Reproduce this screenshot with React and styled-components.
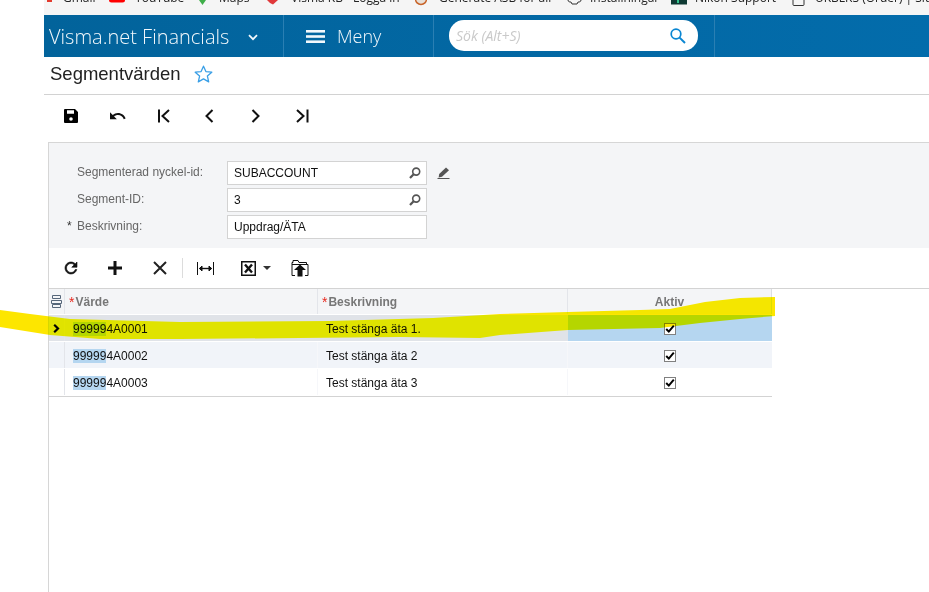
import styled, { createGlobalStyle } from "styled-components"

const Global = createGlobalStyle`
  html, body {
    margin: 0;
    padding: 0;
    background: #fff;
  }
  body {
    font-family: "Liberation Sans", Arial, sans-serif;
    font-size: 12px;
    color: #111;
  }
`

const Page = styled.div`
  position: relative;
  width: 929px;
  height: 592px;
  overflow: hidden;
  background: #fff;
  padding-left: 44px;
  box-sizing: border-box;
`

const Bookmarks = styled.div`
  display: flex;
  align-items: flex-start;
  height: 15px;
  padding-left: 3px;
  background: #f5f5f5;
  overflow: hidden;
`

const Bookmark = styled.div`
  display: flex;
  flex: none;
  align-items: flex-start;
  gap: ${props => props.$gap}px;
  width: ${props => props.$w}px;
  height: 6px;
  font-family: "Open Sans", sans-serif;
  font-size: 12px;
  line-height: 17px;
  white-space: nowrap;
  color: #222;

  svg {
    flex: none;
    display: block;
  }

  span {
    margin-top: -11px;
  }
`

const TopBar = styled.div`
  display: flex;
  height: 42px;
  background: linear-gradient(90deg, #02639b, #036cab);
  color: #f2f8fc;
  font-family: "Open Sans", sans-serif;
`

const Brand = styled.div`
  display: flex;
  align-items: center;
  box-sizing: border-box;
  width: 240px;
  padding-left: 5px;
  border-right: 1px solid #2a7fb3;
  font-size: 20px;
  font-weight: 300;
  white-space: nowrap;

  svg {
    margin: 3px 0 0 19px;
  }
`

const MenuButton = styled.div`
  display: flex;
  align-items: center;
  gap: 12px;
  box-sizing: border-box;
  width: 150px;
  padding-left: 22px;
  border-right: 1px solid #2a7fb3;
  font-size: 18px;
  font-weight: 300;
`

const SearchCell = styled.div`
  display: flex;
  align-items: center;
  box-sizing: border-box;
  width: 281px;
  padding: 0 0 1px 15px;
  border-right: 1px solid #2a7fb3;
`

const SearchBox = styled.div`
  display: flex;
  align-items: center;
  justify-content: space-between;
  box-sizing: border-box;
  width: 249px;
  height: 31px;
  padding: 0 12px 0 7px;
  background: #fff;
  border-radius: 15px;
  color: #c9c9c9;
  font-size: 14px;
  font-style: italic;
`

const TitleRow = styled.div`
  display: flex;
  align-items: center;
  gap: 13px;
  box-sizing: border-box;
  height: 38px;
  padding: 0 0 3px 6px;
  border-bottom: 1px solid #d2d2d2;
`

const Title = styled.h1`
  margin: 0;
  font-size: 18.5px;
  font-weight: 400;
  color: #222;
`

const Toolbar = styled.div`
  display: flex;
  align-items: center;
  box-sizing: border-box;
  height: ${props => props.$h}px;
  padding-bottom: ${props => props.$pad || 0}px;
  border-bottom: 1px solid ${props => props.$line || "transparent"};
`

const MainToolbar = styled(Toolbar)`
  margin-left: 4px;
`

const Body = styled.div`
  margin-left: 4px;
  height: 450px;
  border-left: 1px solid #d6d6d6;
  border-top: 1px solid #d6d6d6;
`

const ToolButton = styled.div`
  display: flex;
  flex: none;
  align-items: center;
  justify-content: center;
  gap: ${props => props.$gap || 0}px;
  width: ${props => props.$w}px;

  svg {
    display: block;
  }
`

const Separator = styled.div`
  flex: none;
  width: 1px;
  height: 20px;
  background: #dcdcdc;
`

const Form = styled.div`
  display: flex;
  flex-direction: column;
  gap: 3px;
  height: 105px;
  box-sizing: border-box;
  padding-top: 18px;
  background: #f4f5f7;
`

const FormRow = styled.div`
  display: flex;
  align-items: center;
  height: 24px;
`

const Label = styled.div`
  flex: none;
  box-sizing: border-box;
  width: 178px;
  padding: 0 0 3px 28px;
  color: #666;
`

const Required = styled.span`
  display: inline-block;
  width: 10px;
  margin-left: -10px;
  color: #333;
`

const Field = styled.div`
  display: flex;
  align-items: center;
  justify-content: space-between;
  box-sizing: border-box;
  width: 200px;
  height: 24px;
  padding: 0 5px 0 6px;
  background: #fff;
  border: 1px solid #d3d3d3;
  color: #111;
`

const Pencil = styled.svg`
  margin-left: 10px;
`

const GridBlock = styled.div`
  width: 723px;
  border-bottom: 1px solid #d3d3d3;
`

const GridRow = styled.div`
  display: grid;
  grid-template-columns: 16px 253px 250px 204px;
  height: ${props => props.$h || 27}px;
  box-sizing: border-box;
  border-bottom: 1px solid #fff;
  background: ${props => props.$bg};
`

const Cell = styled.div`
  display: flex;
  align-items: center;
  justify-content: ${props => (props.$center ? "center" : "flex-start")};
  box-sizing: border-box;
  padding-top: 1px;
  padding-left: ${props => (props.$center ? 0 : 8)}px;
  border-right: 1px solid ${props => props.$line || "#f6f7fa"};
  background: ${props => props.$bg || "transparent"};
  color: #111;
  white-space: nowrap;
`

const HeadCell = styled(Cell)`
  padding-top: 0;
  padding-left: ${props => (props.$center ? 0 : 4)}px;
  border-right-color: ${props => props.$line || "#e3e5ea"};
  font-weight: 700;
  color: #777;
`

const Star = styled.span`
  margin-right: 1px;
  color: #e8261c;
  font-size: 14px;
  line-height: 12px;
  font-weight: 400;
`

const IndicatorCell = styled.div`
  display: flex;
  align-items: center;
  justify-content: center;
  border-right: 1px solid #e3e5ea;
`

const Selected = styled.span`
  background: #b5d6f0;
`

const CheckBox = styled.div`
  display: flex;
  align-items: center;
  justify-content: center;
  box-sizing: border-box;
  width: 12px;
  height: 12px;
  background: #fff;
  border: 1px solid #808080;
`

const Marker = styled.svg`
  position: absolute;
  left: 0;
  top: 290px;
  mix-blend-mode: darken;
  pointer-events: none;
`

const LookupIcon = () => (
  <svg width="12" height="12" viewBox="0 0 12 12" fill="none" stroke="#555" strokeWidth="1.6">
    <circle cx="7.2" cy="4.6" r="3.5" />
    <path d="M4.6 7.2 1 11" strokeWidth="2.2" />
  </svg>
)

const Check = () => (
  <svg width="10" height="10" viewBox="0 0 10 10" fill="none" stroke="#000" strokeWidth="2">
    <path d="M1.2 5 3.8 7.6 8.8 1.6" />
  </svg>
)

const NavIcon = ({ d, bar }) => (
  <svg width="15" height="14" viewBox="0 0 15 14" fill="none" stroke="#111" strokeWidth="2">
    <path d={d} />
    {bar !== undefined && <path d={`M${bar} 0.5v13`} />}
  </svg>
)

function App() {
  return (
    <Page>
      <Global />
      <Bookmarks>
        <Bookmark $w={62} $gap={11}>
          <svg width="5" height="3"><rect width="5" height="2" fill="#e33b2e" /></svg>
          <span>Gmail</span>
        </Bookmark>
        <Bookmark $w={90} $gap={10}>
          <svg width="16" height="3"><rect y="-4" width="16" height="6.5" rx="2.5" fill="#f00" /></svg>
          <span>YouTube</span>
        </Bookmark>
        <Bookmark $w={68} $gap={13}>
          <svg width="7" height="5"><path d="M0 0h7L3.5 5z" fill="#3fae49" /></svg>
          <span>Maps</span>
        </Bookmark>
        <Bookmark $w={148} $gap={13}>
          <svg width="11" height="5"><path d="M0 0h11L6 4.5 3 3z" fill="#e0383a" /></svg>
          <span>Visma KB - Logga in</span>
        </Bookmark>
        <Bookmark $w={152} $gap={12}>
          <svg width="12" height="6"><circle cx="6" cy="-1" r="5.5" fill="#e8e0d8" stroke="#c8642a" strokeWidth="1.5" /></svg>
          <span>Generate ASB for all</span>
        </Bookmark>
        <Bookmark $w={104} $gap={8}>
          <svg width="15" height="5" fill="none" stroke="#333"><path d="M1 0c0 2 2 2 3 2l1 2h5l1-2c1 0 3 0 3-2" /></svg>
          <span>Inställningar</span>
        </Bookmark>
        <Bookmark $w={121} $gap={8}>
          <svg width="16" height="5"><rect width="16" height="4.5" fill="#0f3a34" /><rect x="6" width="2" height="3" fill="#35c58f" /></svg>
          <span>Nikon Support</span>
        </Bookmark>
        <Bookmark $w={140} $gap={10}>
          <svg width="13" height="6" fill="none" stroke="#333"><path d="M1 0v4.5q0 1 1 1h9q1 0 1-1V0" /></svg>
          <span>UKBLKS (Order) | Slutför</span>
        </Bookmark>
      </Bookmarks>

      <TopBar>
        <Brand>
          Visma.net Financials
          <svg width="10" height="7" viewBox="0 0 10 7" fill="none" stroke="#f2f8fc" strokeWidth="1.8">
            <path d="M1 1.2 5 5.2 9 1.2" />
          </svg>
        </Brand>
        <MenuButton>
          <svg width="19" height="13" viewBox="0 0 19 13" fill="#f2f8fc">
            <rect width="19" height="2.6" />
            <rect y="5.2" width="19" height="2.6" />
            <rect y="10.4" width="19" height="2.6" />
          </svg>
          Meny
        </MenuButton>
        <SearchCell>
          <SearchBox>
            Sök (Alt+S)
            <svg width="16" height="16" viewBox="0 0 16 16" fill="none" stroke="#0a86d2" strokeWidth="1.7">
              <circle cx="6" cy="6" r="4.8" />
              <path d="M9.6 9.6 15 15" strokeWidth="2" />
            </svg>
          </SearchBox>
        </SearchCell>
      </TopBar>

      <TitleRow>
        <Title>Segmentvärden</Title>
        <svg width="19" height="18" viewBox="0 0 19 18" fill="none" stroke="#3a9fe6" strokeWidth="1.3" strokeLinejoin="round">
          <path d="M9.5 1.2 11.9 6.6 17.8 7.2 13.4 11.1 14.7 16.9 9.5 13.9 4.3 16.9 5.6 11.1 1.2 7.2 7.1 6.6z" />
        </svg>
      </TitleRow>

      <MainToolbar $h={47} $pad={4}>
        <ToolButton $w={46}>
          <svg width="14" height="14" viewBox="0 0 14 14">
            <path
              fillRule="evenodd"
              fill="#000"
              d="M0 1a1 1 0 0 1 1-1h10l3 3v10a1 1 0 0 1-1 1H1a1 1 0 0 1-1-1zM3 1.2v3.6h7V1.2zM7 8.2a1.8 1.8 0 1 0 0 3.6 1.8 1.8 0 0 0 0-3.6z"
            />
          </svg>
        </ToolButton>
        <ToolButton $w={47}>
          <svg width="16" height="9" viewBox="2 7 21 11">
            <path d="M12.5 8c-2.65 0-5.05.99-6.9 2.6L2 7v9h9l-3.62-3.62c1.39-1.16 3.16-1.88 5.12-1.88 3.54 0 6.55 2.31 7.6 5.5l2.37-.78C21.08 11.03 17.15 8 12.5 8z" fill="#111" />
          </svg>
        </ToolButton>
        <ToolButton $w={46}><NavIcon d="M12 1 5.5 7 12 13" bar={2} /></ToolButton>
        <ToolButton $w={45}><NavIcon d="M10.5 1 4.5 7 10.5 13" /></ToolButton>
        <ToolButton $w={47}><NavIcon d="M4.5 1 10.5 7 4.5 13" /></ToolButton>
        <ToolButton $w={47}><NavIcon d="M2 1 8.5 7 2 13" bar={12.5} /></ToolButton>
      </MainToolbar>

      <Body>
        <Form>
          <FormRow>
            <Label>Segmenterad nyckel-id:</Label>
            <Field>SUBACCOUNT<LookupIcon /></Field>
            <Pencil width="13" height="12" viewBox="0 0 13 12" fill="#555">
              <path d="M9 0.5 12 3.2 5 9.8 1.6 10.5 2.2 7z" />
              <rect x="0.5" y="11" width="12" height="1" />
            </Pencil>
          </FormRow>
          <FormRow>
            <Label>Segment-ID:</Label>
            <Field>3<LookupIcon /></Field>
          </FormRow>
          <FormRow>
            <Label><Required>*</Required>Beskrivning:</Label>
            <Field>Uppdrag/ÄTA</Field>
          </FormRow>
        </Form>

        <Toolbar $h={41} $line="#d3d3d3">
          <ToolButton $w={43}>
            <svg width="18" height="18" viewBox="0 0 24 24">
              <path d="M17.65 6.35C16.2 4.9 14.21 4 12 4c-4.42 0-7.99 3.58-7.99 8s3.57 8 7.99 8c3.73 0 6.84-2.55 7.73-6h-2.08c-.82 2.33-3.04 4-5.65 4-3.31 0-6-2.69-6-6s2.69-6 6-6c1.66 0 3.14.69 4.22 1.78L13 11h7V4l-2.35 2.35z" fill="#111" stroke="#111" strokeWidth="0.8" />
            </svg>
          </ToolButton>
          <ToolButton $w={45}>
            <svg width="14" height="14" viewBox="0 0 14 14" fill="#111">
              <rect x="5.5" width="3" height="14" />
              <rect y="5.5" width="14" height="3" />
            </svg>
          </ToolButton>
          <ToolButton $w={45}>
            <svg width="14" height="14" viewBox="0 0 14 14" fill="none" stroke="#222" strokeWidth="2">
              <path d="M1 1 13 13M13 1 1 13" />
            </svg>
          </ToolButton>
          <Separator />
          <ToolButton $w={44}>
            <svg width="17" height="13" viewBox="0 0 17 13" fill="none" stroke="#111">
              <path d="M.5 0v13M16.5 0v13" />
              <path d="M2.5 6.5h12" strokeWidth="1.4" />
              <path d="M5 4 2.5 6.5 5 9zM12 4 14.5 6.5 12 9z" fill="#111" />
            </svg>
          </ToolButton>
          <ToolButton $w={58} $gap={7}>
            <svg width="15" height="15" viewBox="0 0 15 15" fill="none" stroke="#111">
              <rect x=".75" y=".75" width="13.5" height="13.5" strokeWidth="1.5" />
              <path d="M4 3.5 11 11.5M11 3.5 4 11.5" strokeWidth="2.4" />
            </svg>
            <svg width="8" height="4" viewBox="0 0 8 4" fill="#333">
              <path d="M0 0h8L4 4z" />
            </svg>
          </ToolButton>
          <ToolButton $w={30}>
            <svg width="18" height="18" viewBox="0 0 18 18" fill="none" stroke="#111">
              <path d="M1 16.5V3.5h1V1.5h5l1 2h7.5v2M1 5.5h16v11h-3M1 16.5h3" />
              <path d="M9 5.5 15 11h-3.5v6.5h-5V11H3z" fill="#111" stroke="none" />
            </svg>
          </ToolButton>
        </Toolbar>

        <GridBlock>
          <GridRow $h={26} $bg="#f4f5f7">
            <IndicatorCell>
              <svg width="11" height="13" viewBox="0 0 11 13" fill="none" stroke="#56677a">
                <path d="M1.5.5h8v3h-8zM.5 5.5h10v3H.5zM1.5 9.5h8v3h-8z" />
              </svg>
            </IndicatorCell>
            <HeadCell><Star>*</Star>Värde</HeadCell>
            <HeadCell><Star>*</Star>Beskrivning</HeadCell>
            <HeadCell $center $line="#dcdee2">Aktiv</HeadCell>
          </GridRow>
          <GridRow $bg="#e0e3e8">
            <IndicatorCell>
              <svg width="7" height="9" viewBox="0 0 7 9" fill="none" stroke="#000" strokeWidth="2.2">
                <path d="M1.2.8 5 4.5 1.2 8.2" />
              </svg>
            </IndicatorCell>
            <Cell $line="#e0e3e8"><Selected>99999</Selected>4A0001</Cell>
            <Cell $line="#e0e3e8">Test stänga äta 1.</Cell>
            <Cell $center $bg="#b5d6f0" $line="transparent">
              <CheckBox><Check /></CheckBox>
            </Cell>
          </GridRow>
          <GridRow $bg="#f1f4f9">
            <IndicatorCell />
            <Cell><Selected>99999</Selected>4A0002</Cell>
            <Cell>Test stänga äta 2</Cell>
            <Cell $center $line="transparent"><CheckBox><Check /></CheckBox></Cell>
          </GridRow>
          <GridRow $bg="#fff">
            <IndicatorCell />
            <Cell><Selected>99999</Selected>4A0003</Cell>
            <Cell>Test stänga äta 3</Cell>
            <Cell $center $line="transparent"><CheckBox><Check /></CheckBox></Cell>
          </GridRow>
        </GridBlock>
      </Body>

      <Marker width="775" height="60" viewBox="0 0 775 60">
        <path
          fill="#fde600"
          d="M0 20 L30 24 L70 29 L180 32 L330 31 L433 28 L500 24 L568 22 L640 20 L670 19 L705 12 L740 8 L775 7 L775 26 L740 29 L700 33 L660 38 L568 40 L500 45 L480 48 L400 47 L300 48 L180 49 L100 49 L50 45 L0 37 Z"
        />
      </Marker>
    </Page>
  )
}

export default App
